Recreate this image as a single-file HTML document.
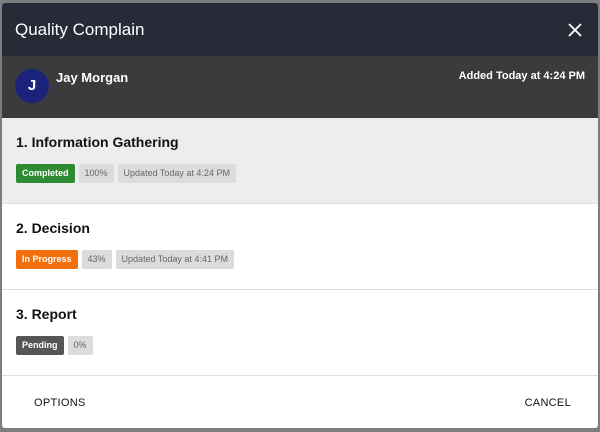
<!DOCTYPE html>
<html><head><style>
*{margin:0;padding:0;box-sizing:border-box}
body{width:600px;height:432px;background:#7d7d80;font-family:"Liberation Sans",Arial,sans-serif;position:relative;overflow:hidden}
.dlg{position:absolute;left:2px;top:3px;width:596px;height:425px;background:#fff;border-radius:3px;overflow:hidden}
.hd{height:53px;background:#272b37;color:#fff;font-size:17px;padding:17px 0 0 13px}
.x{position:absolute;right:16px;top:20px}
.sub{height:62px;background:#3b3a3c;position:relative;color:#fff}
.av{position:absolute;left:13px;top:13px;width:34px;height:34px;border-radius:50%;background:#1b237a;font-weight:bold;font-size:15px;text-align:center;line-height:34px}
.nm{position:absolute;left:54px;top:14px;font-weight:bold;font-size:13px}
.ad{position:absolute;right:13px;top:14px;font-weight:bold;font-size:11px}
.sec{height:86px;border-bottom:1px solid #dedede;padding:16px 0 0 14px}
.sec h3{font-size:14px;font-weight:bold;color:#111;margin-bottom:14px}
.tg{display:inline-block;height:19px;line-height:19px;font-size:9px;padding:0 6px;margin-right:4px;border-radius:2px;background:#dcdcdc;color:#666;vertical-align:top}
.c{background:#2e8b34;color:#fff;font-weight:bold}
.o{background:#f26f0c;color:#fff;font-weight:bold}
.p{background:#555;color:#fff;font-weight:bold}
.ft{position:relative;height:50px}
.ft span{position:absolute;top:21px;font-size:11px;color:#111;letter-spacing:.3px}
</style></head><body>
<div class="dlg">
<div class="hd">Quality Complain</div>
<svg class="x" width="14" height="14" viewBox="0 0 14 14"><path d="M1 1L13 13M13 1L1 13" stroke="#fff" stroke-width="1.8"/></svg>
<div class="sub"><div class="av">J</div><div class="nm">Jay Morgan</div><div class="ad">Added Today at 4:24 PM</div></div>
<div class="sec" style="background:#edecee"><h3>1. Information Gathering</h3><span class="tg c">Completed</span><span class="tg">100%</span><span class="tg">Updated Today at 4:24 PM</span></div>
<div class="sec"><h3>2. Decision</h3><span class="tg o">In Progress</span><span class="tg">43%</span><span class="tg">Updated Today at 4:41 PM</span></div>
<div class="sec"><h3>3. Report</h3><span class="tg p">Pending</span><span class="tg">0%</span></div>
<div class="ft"><span style="left:32px">OPTIONS</span><span style="right:27px">CANCEL</span></div>
</div>
</body></html>
